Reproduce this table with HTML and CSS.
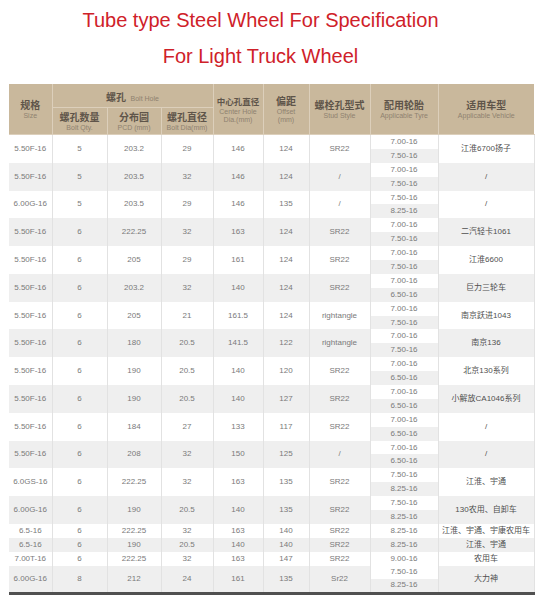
FILE: index.html
```html
<!DOCTYPE html>
<html lang="zh-CN">
<head>
<meta charset="utf-8">
<title>Tube type Steel Wheel For Specification</title>
<link rel="stylesheet" href="styles.css">
</head>
<body>
<div class="title">
  <div>Tube type Steel Wheel For Specification</div>
  <div>For Light Truck Wheel</div>
</div>
<table class="spec">
  <colgroup>
    <col class="c1"><col class="c2"><col class="c3"><col class="c4"><col class="c5"><col class="c6"><col class="c7"><col class="c8"><col class="c9">
  </colgroup>
  <thead>
    <tr class="h1">
      <th rowspan="2"><span class="zh">规格</span><span class="en">Size</span></th>
      <th colspan="3"><span class="zh inl">螺孔</span> <span class="en inl">Bolt Hole</span></th>
      <th rowspan="2"><span class="zh sm">中心孔直径</span><span class="en">Center Hole</span><span class="en">Dia.(mm)</span></th>
      <th rowspan="2"><span class="zh">偏距</span><span class="en">Offset</span><span class="en">(mm)</span></th>
      <th rowspan="2"><span class="zh">螺栓孔型式</span><span class="en">Stud Style</span></th>
      <th rowspan="2"><span class="zh">配用轮胎</span><span class="en">Applicable Tyre</span></th>
      <th rowspan="2"><span class="zh">适用车型</span><span class="en">Applicable Vehicle</span></th>
    </tr>
    <tr class="h2">
      <th><span class="zh">螺孔数量</span><span class="en">Bolt Qty.</span></th>
      <th><span class="zh">分布圆</span><span class="en">PCD (mm)</span></th>
      <th><span class="zh">螺孔直径</span><span class="en">Bolt Dia(mm)</span></th>
    </tr>
  </thead>
  <tbody>
    <tr class="w d"><td rowspan="2">5.50F-16</td><td rowspan="2">5</td><td rowspan="2">203.2</td><td rowspan="2">29</td><td rowspan="2">146</td><td rowspan="2">124</td><td rowspan="2">SR22</td><td class="tt">7.00-16</td><td rowspan="2" class="veh">江淮6700扬子</td></tr>
    <tr class="w d"><td class="tb">7.50-16</td></tr>
    <tr class="g d"><td rowspan="2">5.50F-16</td><td rowspan="2">5</td><td rowspan="2">203.5</td><td rowspan="2">32</td><td rowspan="2">146</td><td rowspan="2">124</td><td rowspan="2">/</td><td class="tt">7.00-16</td><td rowspan="2" class="veh">/</td></tr>
    <tr class="g d"><td class="tb">7.50-16</td></tr>
    <tr class="w d"><td rowspan="2">6.00G-16</td><td rowspan="2">5</td><td rowspan="2">203.5</td><td rowspan="2">29</td><td rowspan="2">146</td><td rowspan="2">135</td><td rowspan="2">/</td><td class="tt">7.50-16</td><td rowspan="2" class="veh">/</td></tr>
    <tr class="w d"><td class="tb">8.25-16</td></tr>
    <tr class="g d"><td rowspan="2">5.50F-16</td><td rowspan="2">6</td><td rowspan="2">222.25</td><td rowspan="2">32</td><td rowspan="2">163</td><td rowspan="2">124</td><td rowspan="2">SR22</td><td class="tt">7.00-16</td><td rowspan="2" class="veh">二汽轻卡1061</td></tr>
    <tr class="g d"><td class="tb">7.50-16</td></tr>
    <tr class="w d"><td rowspan="2">5.50F-16</td><td rowspan="2">6</td><td rowspan="2">205</td><td rowspan="2">29</td><td rowspan="2">161</td><td rowspan="2">124</td><td rowspan="2">SR22</td><td class="tt">7.00-16</td><td rowspan="2" class="veh">江淮6600</td></tr>
    <tr class="w d"><td class="tb">7.50-16</td></tr>
    <tr class="g d"><td rowspan="2">5.50F-16</td><td rowspan="2">6</td><td rowspan="2">203.2</td><td rowspan="2">32</td><td rowspan="2">140</td><td rowspan="2">124</td><td rowspan="2">SR22</td><td class="tt">7.00-16</td><td rowspan="2" class="veh">巨力三轮车</td></tr>
    <tr class="g d"><td class="tb">6.50-16</td></tr>
    <tr class="w d"><td rowspan="2">5.50F-16</td><td rowspan="2">6</td><td rowspan="2">205</td><td rowspan="2">21</td><td rowspan="2">161.5</td><td rowspan="2">124</td><td rowspan="2">rightangle</td><td class="tt">7.00-16</td><td rowspan="2" class="veh">南京跃进1043</td></tr>
    <tr class="w d"><td class="tb">7.50-16</td></tr>
    <tr class="g d"><td rowspan="2">5.50F-16</td><td rowspan="2">6</td><td rowspan="2">180</td><td rowspan="2">20.5</td><td rowspan="2">141.5</td><td rowspan="2">122</td><td rowspan="2">rightangle</td><td class="tt">7.00-16</td><td rowspan="2" class="veh">南京136</td></tr>
    <tr class="g d"><td class="tb">7.50-16</td></tr>
    <tr class="w d"><td rowspan="2">5.50F-16</td><td rowspan="2">6</td><td rowspan="2">190</td><td rowspan="2">20.5</td><td rowspan="2">140</td><td rowspan="2">120</td><td rowspan="2">SR22</td><td class="tt">7.00-16</td><td rowspan="2" class="veh">北京130系列</td></tr>
    <tr class="w d"><td class="tb">6.50-16</td></tr>
    <tr class="g d"><td rowspan="2">5.50F-16</td><td rowspan="2">6</td><td rowspan="2">190</td><td rowspan="2">20.5</td><td rowspan="2">140</td><td rowspan="2">127</td><td rowspan="2">SR22</td><td class="tt">7.00-16</td><td rowspan="2" class="veh">小解放CA1046系列</td></tr>
    <tr class="g d"><td class="tb">6.50-16</td></tr>
    <tr class="w d"><td rowspan="2">5.50F-16</td><td rowspan="2">6</td><td rowspan="2">184</td><td rowspan="2">27</td><td rowspan="2">133</td><td rowspan="2">117</td><td rowspan="2">SR22</td><td class="tt">7.00-16</td><td rowspan="2" class="veh">/</td></tr>
    <tr class="w d"><td class="tb">6.50-16</td></tr>
    <tr class="g d"><td rowspan="2">5.50F-16</td><td rowspan="2">6</td><td rowspan="2">208</td><td rowspan="2">32</td><td rowspan="2">150</td><td rowspan="2">125</td><td rowspan="2">/</td><td class="tt">7.00-16</td><td rowspan="2" class="veh">/</td></tr>
    <tr class="g d"><td class="tb">6.50-16</td></tr>
    <tr class="w d"><td rowspan="2">6.0GS-16</td><td rowspan="2">6</td><td rowspan="2">222.25</td><td rowspan="2">32</td><td rowspan="2">163</td><td rowspan="2">135</td><td rowspan="2">SR22</td><td class="tt">7.50-16</td><td rowspan="2" class="veh">江淮、宇通</td></tr>
    <tr class="w d"><td class="tb">8.25-16</td></tr>
    <tr class="g d"><td rowspan="2">6.00G-16</td><td rowspan="2">6</td><td rowspan="2">190</td><td rowspan="2">20.5</td><td rowspan="2">140</td><td rowspan="2">135</td><td rowspan="2">SR22</td><td class="tt">7.50-16</td><td rowspan="2" class="veh">130农用、自卸车</td></tr>
    <tr class="g d"><td class="tb">8.25-16</td></tr>
    <tr class="w s"><td>6.5-16</td><td>6</td><td>222.25</td><td>32</td><td>163</td><td>140</td><td>SR22</td><td>8.25-16</td><td class="veh">江淮、宇通、宇康农用车</td></tr>
    <tr class="g s"><td>6.5-16</td><td>6</td><td>190</td><td>20.5</td><td>140</td><td>140</td><td>SR22</td><td>8.25-16</td><td class="veh">江淮、宇通</td></tr>
    <tr class="w s"><td>7.00T-16</td><td>6</td><td>222.25</td><td>32</td><td>163</td><td>147</td><td>SR22</td><td>9.00-16</td><td class="veh">农用车</td></tr>
    <tr class="g l"><td rowspan="2">6.00G-16</td><td rowspan="2">8</td><td rowspan="2">212</td><td rowspan="2">24</td><td rowspan="2">161</td><td rowspan="2">135</td><td rowspan="2">Sr22</td><td class="tt">7.50-16</td><td rowspan="2" class="veh">大力神</td></tr>
    <tr class="g l"><td class="tb">8.25-16</td></tr>
  </tbody>
</table>
</body>
</html>
```

FILE: styles.css
```css
html, body {
  margin: 0;
  padding: 0;
  background: #ffffff;
}

body {
  font-family: "Liberation Sans", Arial, "Noto Sans CJK SC", sans-serif;
}

.title {
  padding-top: 2px;
  padding-right: 20px;
  text-align: center;
  color: #cf2129;
  font-family: "Liberation Sans", Arial, sans-serif;
  font-size: 20px;
  line-height: 36px;
  margin-bottom: 10px;
}

.spec {
  margin-left: 9px;
  width: 525px;
  border-collapse: collapse;
  table-layout: fixed;
  border-bottom: 3px solid #505050;
}

.c1 { width: 43px; }
.c2 { width: 55px; }
.c3 { width: 54px; }
.c4 { width: 52px; }
.c5 { width: 50px; }
.c6 { width: 46px; }
.c7 { width: 61px; }
.c8 { width: 68px; }
.c9 { width: 96px; }

.spec th {
  background: #c9b89c;
  border: 1px solid #dccfbb;
  border-top: none;
  padding: 0;
  font-weight: normal;
  text-align: center;
  vertical-align: middle;
  white-space: nowrap;
}

.spec th:first-child { border-left: none; }
.spec tr.h1 th:last-child { border-right: none; }

.h1 th { height: 23px; }
.h2 th { height: 26px; }

.zh {
  display: block;
  font-family: "Noto Sans CJK SC", sans-serif;
  font-weight: bold;
  font-size: 10px;
  line-height: 14px;
  color: #5f554a;
}

.zh.sm { font-size: 8.5px; }

.en {
  display: block;
  font-family: "Liberation Sans", Arial, sans-serif;
  font-size: 7px;
  line-height: 8px;
  color: #8f8270;
}

.zh.inl, .en.inl { display: inline; }

.spec td {
  padding: 0;
  text-align: center;
  vertical-align: middle;
  font-size: 8px;
  line-height: 10px;
  color: #7a7a7a;
  border-left: 1px solid #e2e2e2;
  border-right: 1px solid #e2e2e2;
  white-space: nowrap;
  overflow: hidden;
}

.spec td:first-child { border-left: none; }

tr.w td { background: #ffffff; }
tr.g td { background: #efefef; }
tr.w td.tt, tr.g td.tt { background: #ffffff; }
tr.w td.tb, tr.g td.tb { background: #efefef; }

tr.d td { height: 13.9px; }
tr.s td { height: 14px; }
tr.l td { height: 13px; }

.spec td.veh {
  font-family: "Liberation Sans", Arial, "Noto Sans CJK SC", sans-serif;
  color: #4f4f4f;
}
```
